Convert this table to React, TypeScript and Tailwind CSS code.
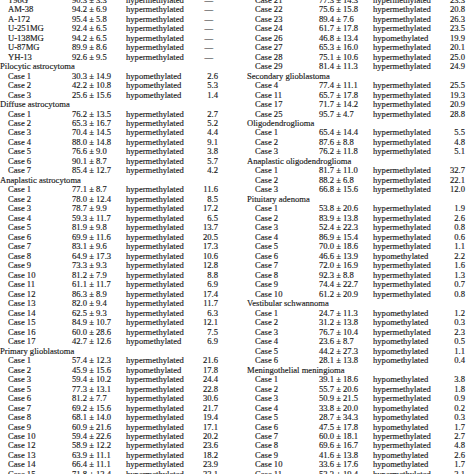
import React from "react";

type Row = { h: string } | { n: string; v: string; m: string; r: string };

const HY = "hypermethylated";
const HO = "hypomethylated";

const left: Row[] = [
  { n: "T98G", v: "90.3 ± 3.3", m: HY, r: "—" },
  { n: "AM-38", v: "94.2 ± 6.9", m: HY, r: "—" },
  { n: "A-172", v: "95.4 ± 5.8", m: HY, r: "—" },
  { n: "U-251MG", v: "92.4 ± 6.5", m: HY, r: "—" },
  { n: "U-138MG", v: "94.2 ± 6.5", m: HY, r: "—" },
  { n: "U-87MG", v: "89.9 ± 8.6", m: HY, r: "—" },
  { n: "YH-13", v: "92.6 ± 9.5", m: HY, r: "—" },
  { h: "Pilocytic astrocytoma" },
  { n: "Case 1", v: "30.3 ± 14.9", m: HO, r: "2.6" },
  { n: "Case 2", v: "42.2 ± 10.8", m: HO, r: "5.3" },
  { n: "Case 3", v: "25.6 ± 15.6", m: HO, r: "1.4" },
  { h: "Diffuse astrocytoma" },
  { n: "Case 1", v: "76.2 ± 13.5", m: HY, r: "2.7" },
  { n: "Case 2", v: "65.3 ± 16.7", m: HY, r: "5.2" },
  { n: "Case 3", v: "70.4 ± 14.5", m: HY, r: "4.4" },
  { n: "Case 4", v: "88.0 ± 14.8", m: HY, r: "9.1" },
  { n: "Case 5", v: "76.6 ± 9.0", m: HY, r: "3.8" },
  { n: "Case 6", v: "90.1 ± 8.7", m: HY, r: "5.7" },
  { n: "Case 7", v: "85.4 ± 12.7", m: HY, r: "4.2" },
  { h: "Anaplastic astrocytoma" },
  { n: "Case 1", v: "77.1 ± 8.7", m: HY, r: "11.6" },
  { n: "Case 2", v: "78.0 ± 12.4", m: HY, r: "8.5" },
  { n: "Case 3", v: "78.7 ± 9.9", m: HY, r: "17.2" },
  { n: "Case 4", v: "59.3 ± 11.7", m: HY, r: "6.5" },
  { n: "Case 5", v: "81.9 ± 9.8", m: HY, r: "13.7" },
  { n: "Case 6", v: "69.9 ± 11.6", m: HY, r: "20.5" },
  { n: "Case 7", v: "83.1 ± 9.6", m: HY, r: "17.3" },
  { n: "Case 8", v: "64.9 ± 17.3", m: HY, r: "10.6" },
  { n: "Case 9", v: "73.3 ± 9.3", m: HY, r: "12.8" },
  { n: "Case 10", v: "81.2 ± 7.9", m: HY, r: "8.8" },
  { n: "Case 11", v: "61.1 ± 11.7", m: HY, r: "6.9" },
  { n: "Case 12", v: "86.3 ± 8.9", m: HY, r: "17.4" },
  { n: "Case 13", v: "82.0 ± 9.4", m: HY, r: "11.7" },
  { n: "Case 14", v: "62.5 ± 9.3", m: HY, r: "6.3" },
  { n: "Case 15", v: "84.9 ± 10.7", m: HY, r: "12.1" },
  { n: "Case 16", v: "60.0 ± 28.6", m: HY, r: "7.5" },
  { n: "Case 17", v: "42.7 ± 12.6", m: HO, r: "6.9" },
  { h: "Primary glioblastoma" },
  { n: "Case 1", v: "57.4 ± 12.3", m: HY, r: "21.6" },
  { n: "Case 2", v: "45.9 ± 15.6", m: HO, r: "17.8" },
  { n: "Case 3", v: "59.4 ± 10.2", m: HY, r: "24.4" },
  { n: "Case 5", v: "77.3 ± 13.1", m: HY, r: "22.8" },
  { n: "Case 6", v: "81.2 ± 7.7", m: HY, r: "30.6" },
  { n: "Case 7", v: "69.2 ± 15.6", m: HY, r: "21.7" },
  { n: "Case 8", v: "68.1 ± 14.0", m: HY, r: "19.4" },
  { n: "Case 9", v: "60.9 ± 21.6", m: HY, r: "17.1" },
  { n: "Case 10", v: "59.4 ± 22.6", m: HY, r: "20.2" },
  { n: "Case 12", v: "58.9 ± 12.2", m: HY, r: "23.6" },
  { n: "Case 13", v: "63.9 ± 11.1", m: HY, r: "18.2" },
  { n: "Case 14", v: "66.4 ± 11.1", m: HY, r: "23.9" },
  { n: "Case 15", v: "71.8 ± 12.4", m: HY, r: "22.1" },
];

const right: Row[] = [
  { n: "Case 21", v: "77.3 ± 14.3", m: HY, r: "23.3" },
  { n: "Case 22", v: "75.6 ± 15.8", m: HY, r: "20.8" },
  { n: "Case 23", v: "89.4 ± 7.6", m: HY, r: "26.3" },
  { n: "Case 24", v: "61.7 ± 17.8", m: HY, r: "23.5" },
  { n: "Case 26", v: "46.8 ± 13.4", m: HO, r: "19.9" },
  { n: "Case 27", v: "65.3 ± 16.0", m: HY, r: "20.1" },
  { n: "Case 28", v: "75.1 ± 10.6", m: HY, r: "25.0" },
  { n: "Case 29", v: "81.4 ± 11.3", m: HY, r: "24.9" },
  { h: "Secondary glioblastoma" },
  { n: "Case 4", v: "77.4 ± 11.1", m: HY, r: "25.5" },
  { n: "Case 11", v: "65.7 ± 17.8", m: HY, r: "19.3" },
  { n: "Case 17", v: "71.7 ± 14.2", m: HY, r: "20.9" },
  { n: "Case 25", v: "95.7 ± 4.7", m: HY, r: "28.8" },
  { h: "Oligodendroglioma" },
  { n: "Case 1", v: "65.4 ± 14.4", m: HY, r: "5.5" },
  { n: "Case 2", v: "87.6 ± 8.8", m: HY, r: "4.8" },
  { n: "Case 3", v: "76.2 ± 11.8", m: HY, r: "5.1" },
  { h: "Anaplastic oligodendroglioma" },
  { n: "Case 1", v: "81.7 ± 11.0", m: HY, r: "32.7" },
  { n: "Case 2", v: "88.2 ± 6.8", m: HY, r: "22.1" },
  { n: "Case 3", v: "66.8 ± 15.6", m: HY, r: "12.0" },
  { h: "Pituitary adenoma" },
  { n: "Case 1", v: "53.8 ± 20.6", m: HY, r: "1.9" },
  { n: "Case 2", v: "83.9 ± 13.8", m: HY, r: "2.6" },
  { n: "Case 3", v: "52.4 ± 22.3", m: HY, r: "0.8" },
  { n: "Case 4", v: "86.9 ± 15.4", m: HY, r: "0.6" },
  { n: "Case 5", v: "70.0 ± 18.6", m: HY, r: "1.1" },
  { n: "Case 6", v: "46.6 ± 13.9", m: HO, r: "2.2" },
  { n: "Case 7", v: "72.0 ± 16.9", m: HY, r: "1.6" },
  { n: "Case 8", v: "92.3 ± 8.8", m: HY, r: "1.3" },
  { n: "Case 9", v: "74.4 ± 22.7", m: HY, r: "0.7" },
  { n: "Case 10", v: "61.2 ± 20.9", m: HY, r: "0.8" },
  { h: "Vestibular schwannoma" },
  { n: "Case 1", v: "24.7 ± 11.3", m: HO, r: "1.2" },
  { n: "Case 2", v: "31.2 ± 13.8", m: HO, r: "0.3" },
  { n: "Case 3", v: "76.7 ± 10.4", m: HY, r: "2.3" },
  { n: "Case 4", v: "23.6 ± 8.7", m: HO, r: "0.5" },
  { n: "Case 5", v: "44.2 ± 27.3", m: HO, r: "1.1" },
  { n: "Case 6", v: "28.1 ± 13.8", m: HO, r: "0.4" },
  { h: "Meningothelial meningioma" },
  { n: "Case 1", v: "39.1 ± 18.6", m: HO, r: "3.8" },
  { n: "Case 2", v: "55.7 ± 20.6", m: HY, r: "1.8" },
  { n: "Case 3", v: "50.9 ± 21.5", m: HY, r: "0.9" },
  { n: "Case 4", v: "33.8 ± 20.0", m: HO, r: "0.2" },
  { n: "Case 5", v: "28.7 ± 34.3", m: HO, r: "0.3" },
  { n: "Case 6", v: "47.5 ± 17.8", m: HO, r: "1.7" },
  { n: "Case 7", v: "60.0 ± 18.1", m: HY, r: "2.7" },
  { n: "Case 8", v: "69.6 ± 16.7", m: HY, r: "4.8" },
  { n: "Case 9", v: "41.6 ± 13.8", m: HO, r: "2.6" },
  { n: "Case 10", v: "33.6 ± 17.6", m: HO, r: "1.7" },
  { n: "Case 11", v: "52.3 ± 19.4", m: HY, r: "2.1" },
];

function Table({ rows }: { rows: Row[] }) {
  return (
    <div className="flex w-[218px] shrink-0 flex-col">
      {rows.map((row, i) =>
        "h" in row ? (
          <div key={i} className="h-[9.49px] whitespace-nowrap leading-[9.49px]">
            {row.h}
          </div>
        ) : (
          <div key={i} className="flex h-[9.49px] items-center whitespace-nowrap leading-[9.49px]">
            <div className="w-[72px] shrink-0 pl-[8px]">{row.n}</div>
            <div className="w-[54px] shrink-0">{row.v}</div>
            <div className="flex-1">{row.m}</div>
            <div className={row.r === "—" ? "pr-[5px] text-right" : "text-right"}>{row.r}</div>
          </div>
        )
      )}
    </div>
  );
}

export default function App() {
  return (
    <div className="h-[474px] w-[474px] overflow-hidden bg-white">
      <div className="-mt-[4.3px] flex gap-[29px] font-['Liberation_Serif',serif] text-[8.6px] text-[#1a1a1a] [-webkit-text-stroke:0.15px_#1a1a1a]">
        <Table rows={left} />
        <Table rows={right} />
      </div>
    </div>
  );
}
